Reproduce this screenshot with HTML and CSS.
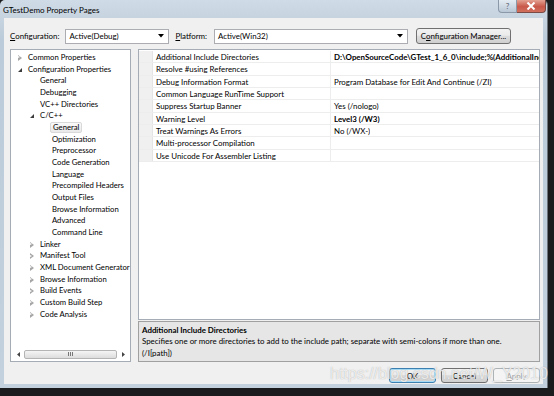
FILE: index.html
```html
<!DOCTYPE html>
<html lang="en">
<head>
    <meta charset="UTF-8">
    <title>GTestDemo Property Pages</title>
    <link rel="stylesheet" href="styles.css">
</head>
<body>
    <div class="ventana">
        <div class="titulo">
            <span class="titulo-texto">GTestDemo Property Pages</span>
            <div class="botones-titulo">
                <span class="btn-ayuda">?</span>
                <span class="btn-cerrar">
                    <svg width="10" height="8" viewBox="0 0 10 8"><path d="M1.5 0.5 L8.5 7.5 M8.5 0.5 L1.5 7.5" stroke="#fff" stroke-width="2"/></svg>
                </span>
            </div>
        </div>

        <div class="cliente">
            <div class="barra">
                <span class="etiqueta"><u>C</u>onfiguration:</span>
                <div class="combo combo-config">
                    <span>Active(Debug)</span>
                    <svg width="6" height="4" viewBox="0 0 6 4"><path d="M0 0 H6 L3 3.5 Z" fill="#000"/></svg>
                </div>
                <span class="etiqueta etiqueta-plat"><u>P</u>latform:</span>
                <div class="combo combo-plat">
                    <span>Active(Win32)</span>
                    <svg width="6" height="4" viewBox="0 0 6 4"><path d="M0 0 H6 L3 3.5 Z" fill="#000"/></svg>
                </div>
                <button class="boton boton-manager">C<u>o</u>nfiguration Manager...</button>
            </div>

            <div class="principal">
                <div class="arbol">
                    <ul class="lista">
                        <li class="n0"><i class="flecha cerrada"></i>Common Properties</li>
                        <li class="n0"><i class="flecha abierta"></i>Configuration Properties</li>
                        <li class="n1"><i class="flecha"></i>General</li>
                        <li class="n1"><i class="flecha"></i>Debugging</li>
                        <li class="n1"><i class="flecha"></i>VC++ Directories</li>
                        <li class="n1"><i class="flecha abierta"></i>C/C++</li>
                        <li class="n2"><i class="flecha"></i><span class="seleccionado">General</span></li>
                        <li class="n2"><i class="flecha"></i>Optimization</li>
                        <li class="n2"><i class="flecha"></i>Preprocessor</li>
                        <li class="n2"><i class="flecha"></i>Code Generation</li>
                        <li class="n2"><i class="flecha"></i>Language</li>
                        <li class="n2"><i class="flecha"></i>Precompiled Headers</li>
                        <li class="n2"><i class="flecha"></i>Output Files</li>
                        <li class="n2"><i class="flecha"></i>Browse Information</li>
                        <li class="n2"><i class="flecha"></i>Advanced</li>
                        <li class="n2"><i class="flecha"></i>Command Line</li>
                        <li class="n1"><i class="flecha cerrada"></i>Linker</li>
                        <li class="n1"><i class="flecha cerrada"></i>Manifest Tool</li>
                        <li class="n1"><i class="flecha cerrada"></i>XML Document Generator</li>
                        <li class="n1"><i class="flecha cerrada"></i>Browse Information</li>
                        <li class="n1"><i class="flecha cerrada"></i>Build Events</li>
                        <li class="n1"><i class="flecha cerrada"></i>Custom Build Step</li>
                        <li class="n1"><i class="flecha cerrada"></i>Code Analysis</li>
                    </ul>
                    <div class="scroll">
                        <span class="scroll-flecha">
                            <svg width="3" height="5" viewBox="0 0 3 5"><path d="M3 0 V5 L0 2.5 Z" fill="#444"/></svg>
                        </span>
                        <span class="scroll-pulgar"><span class="grip"></span></span>
                        <span class="scroll-flecha">
                            <svg width="3" height="5" viewBox="0 0 3 5"><path d="M0 0 V5 L3 2.5 Z" fill="#444"/></svg>
                        </span>
                    </div>
                </div>

                <div class="derecha">
                    <div class="rejilla">
                        <div class="fila"><span class="nombre">Additional Include Directories</span><span class="valor negrita">D:\OpenSourceCode\GTest_1_6_0\include;%(AdditionalIncludeDirectories)</span></div>
                        <div class="fila"><span class="nombre">Resolve #using References</span><span class="valor"></span></div>
                        <div class="fila"><span class="nombre">Debug Information Format</span><span class="valor">Program Database for Edit And Continue (/ZI)</span></div>
                        <div class="fila"><span class="nombre">Common Language RunTime Support</span><span class="valor"></span></div>
                        <div class="fila"><span class="nombre">Suppress Startup Banner</span><span class="valor">Yes (/nologo)</span></div>
                        <div class="fila"><span class="nombre">Warning Level</span><span class="valor negrita">Level3 (/W3)</span></div>
                        <div class="fila"><span class="nombre">Treat Warnings As Errors</span><span class="valor">No (/WX-)</span></div>
                        <div class="fila"><span class="nombre">Multi-processor Compilation</span><span class="valor"></span></div>
                        <div class="fila"><span class="nombre">Use Unicode For Assembler Listing</span><span class="valor"></span></div>
                    </div>
                    <div class="descripcion">
                        <p class="desc-titulo">Additional Include Directories</p>
                        <p>Specifies one or more directories to add to the include path; separate with semi-colons if more than one.</p>
                        <p>(/I[path])</p>
                    </div>
                </div>
            </div>

            <div class="pie">
                <button class="boton boton-ok">OK</button>
                <button class="boton">Cancel</button>
                <button class="boton" disabled><u>A</u>pply</button>
            </div>
            <span class="marca">https://blog.csdn.net/W_Y2010</span>
        </div>
    </div>
</body>
</html>
```

FILE: styles.css
```css
body {
    margin: 0;
    width: 554px;
    height: 396px;
    overflow: hidden;
    background-color: #1b1c1e;
    font-family: 'Lato', 'Noto Sans', sans-serif;
    font-size: 7.9px;
    color: #000;
}

.ventana {
    width: 547px;
    height: 388px;
    background: linear-gradient(to bottom, #cfdbe6, #bccbd9 40px, #c3d1de);
    border-radius: 5px 5px 0 0;
    display: flex;
    flex-direction: column;
    box-shadow: 1px 0 0 #6d737a;
}

.titulo {
    height: 18px;
    display: flex;
    align-items: flex-start;
    justify-content: space-between;
    padding-left: 3px;
}

.titulo-texto {
    line-height: 20px;
    font-size: 8px;
}

.botones-titulo {
    display: flex;
    margin-right: 1px;
}

.btn-ayuda {
    width: 19px;
    height: 13px;
    box-sizing: border-box;
    border: 1px solid #8a98a8;
    border-top: none;
    border-radius: 0 0 0 4px;
    background: linear-gradient(to bottom, #e4ecf3, #b9c7d5);
    color: #5a6470;
    font-size: 8px;
    text-align: center;
    line-height: 12px;
}

.btn-cerrar {
    width: 29px;
    height: 13px;
    box-sizing: border-box;
    border: 1px solid #7a4a45;
    border-top: none;
    border-left: none;
    border-radius: 0 0 4px 0;
    background: linear-gradient(to bottom, #e4a292, #c8584a 55%, #d2705d);
    display: flex;
    justify-content: center;
    align-items: center;
}

.cliente {
    flex: 1;
    min-width: 0;
    margin: 0 4px 4px 4px;
    background-color: #f0f0f0;
    display: flex;
    flex-direction: column;
    padding: 10px 3px 0 6px;
    position: relative;
}

.barra {
    display: flex;
    align-items: center;
    height: 16px;
}

.etiqueta {
    margin-right: 6px;
}

.etiqueta-plat {
    margin-left: 6px;
    margin-right: 7px;
}

.combo {
    height: 15px;
    box-sizing: border-box;
    border: 1px solid #abadb3;
    background-color: #fff;
    display: flex;
    align-items: center;
    justify-content: space-between;
    padding: 0 4px 0 3px;
}

.combo-config {
    width: 104px;
}

.combo-plat {
    width: 194px;
}

.boton {
    font-family: inherit;
    font-size: 7.9px;
    height: 16px;
    padding: 0;
    box-sizing: border-box;
    border: 1px solid #707070;
    border-radius: 3px;
    background: linear-gradient(to bottom, #f2f2f2, #ebebeb 45%, #dddddd 50%, #cfcfcf);
    color: #000;
    white-space: nowrap;
}

.boton-manager {
    width: 95px;
    margin-left: 8px;
}

.boton:disabled {
    color: #a0a0a0;
    border-color: #adb2b5;
    background: #f4f4f4;
}

.boton-ok {
    border-color: #3c7fb1;
    box-shadow: inset 0 0 0 1px #a6dcf5;
}

.principal {
    display: flex;
    gap: 7px;
    margin-top: 5px;
    height: 313px;
}

.arbol {
    width: 121px;
    flex-shrink: 0;
    box-sizing: border-box;
    border: 1px solid #a5acb5;
    background-color: #fff;
    display: flex;
    flex-direction: column;
}

.lista {
    list-style: none;
    margin: 0;
    padding: 2px 0 0 0;
    flex: 1;
    overflow: hidden;
    font-size: 7.7px;
}

.lista li {
    height: 11.68px;
    line-height: 11.68px;
    white-space: nowrap;
    display: flex;
    align-items: center;
}

.lista .n0 { padding-left: 6px; }
.lista .n1 { padding-left: 18px; }
.lista .n2 { padding-left: 30px; }

.flecha {
    width: 11px;
    flex-shrink: 0;
    height: 6px;
    position: relative;
}

.flecha.cerrada::before {
    content: "";
    position: absolute;
    left: 1px;
    top: 0;
    border-left: 4px solid #a6a6a6;
    border-top: 3px solid transparent;
    border-bottom: 3px solid transparent;
}

.flecha.cerrada::after {
    content: "";
    position: absolute;
    left: 1px;
    top: 1.5px;
    border-left: 2px solid #fff;
    border-top: 1.5px solid transparent;
    border-bottom: 1.5px solid transparent;
}

.flecha.abierta::before {
    content: "";
    position: absolute;
    left: 1px;
    top: 1px;
    border-right: 4px solid #3c3c3c;
    border-top: 4px solid transparent;
}

.seleccionado {
    margin-left: -2px;
    padding: 0 2px;
    line-height: 9px;
    border: 1px solid #d9d9d9;
    border-radius: 2px;
    background: linear-gradient(to bottom, #fafafa, #e9e9e9);
}

.scroll {
    height: 10px;
    margin: 0 1px 2px 1px;
    display: flex;
    align-items: center;
}

.scroll-flecha {
    width: 12px;
    display: flex;
    justify-content: center;
}

.scroll-pulgar {
    flex: 1;
    height: 9px;
    box-sizing: border-box;
    border: 1px solid #b4b4b4;
    border-radius: 2px;
    background: linear-gradient(to bottom, #f5f5f5, #dcdcdc);
    display: flex;
    justify-content: center;
    align-items: center;
}

.grip {
    width: 5px;
    height: 4px;
    background: repeating-linear-gradient(to right, #777 0 1px, transparent 1px 2px);
}

.derecha {
    flex: 1;
    min-width: 0;
    display: flex;
    flex-direction: column;
    gap: 1px;
}

.rejilla {
    height: 272px;
    box-sizing: border-box;
    border: 1px solid #a5acb5;
    background-color: #fff;
    overflow: hidden;
    padding-top: 1px;
}

.fila {
    display: flex;
    height: 12.33px;
    line-height: 12.5px;
    border-bottom: 1px solid #ededed;
    box-sizing: border-box;
    white-space: nowrap;
    overflow: hidden;
    background: linear-gradient(to right, #f0f0f0 13px, #fff 13px);
}

.nombre {
    width: 179px;
    flex-shrink: 0;
    margin-left: 13px;
    padding-left: 3px;
    box-sizing: border-box;
    border-right: 1px solid #ededed;
    border-left: 1px solid #e4e4e4;
}

.valor {
    padding-left: 3px;
    overflow: hidden;
}

.negrita {
    font-weight: bold;
}

.descripcion {
    flex: 1;
    box-sizing: border-box;
    border: 1px solid #a0a0a0;
    background-color: #e6e6e6;
    padding: 3px 3px 2px;
}

.descripcion p {
    margin: 0;
    line-height: 11.5px;
}

.desc-titulo {
    font-weight: bold;
}

.pie {
    display: flex;
    justify-content: flex-end;
    gap: 5px;
    margin-top: 6px;
}

.pie .boton {
    width: 47px;
    height: 15px;
}

.marca {
    position: absolute;
    left: 326px;
    top: 347px;
    font-family: 'Liberation Sans', sans-serif;
    font-size: 16px;
    color: rgba(255, 255, 255, 0.75);
    text-shadow: 0 0 1px rgba(120, 120, 120, 0.6);
    white-space: nowrap;
}
```
